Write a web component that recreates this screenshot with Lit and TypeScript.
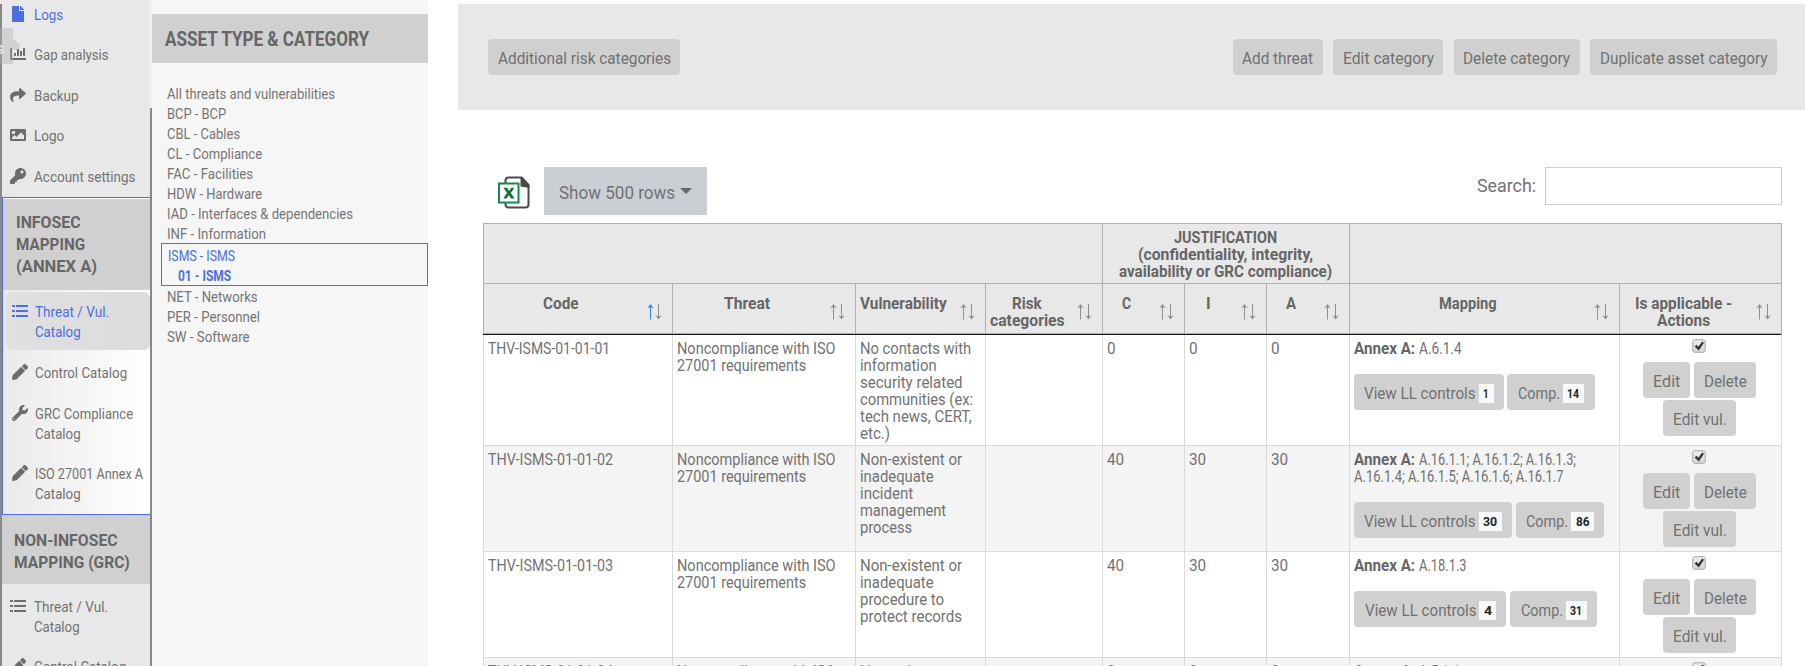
import { LitElement, html, svg, css, nothing } from "lit";
import { customElement, property } from "lit/decorators.js";
import { classMap } from "lit/directives/class-map.js";

type Line = [string, number];

/** One line of text condensed to a given advance width. */
@customElement("fit-text")
class FitText extends LitElement {
  @property() text = "";
  @property({ type: Number }) w = 0;
  static styles = css`
    :host { display: inline-block; vertical-align: top; white-space: nowrap; text-align: left; flex: none; }
    span { display: inline-block; transform-origin: 0 0; vertical-align: top; }
  `;
  render() {
    return html`<span>${this.text}</span>`;
  }
  updated() {
    const el = this.renderRoot.querySelector("span") as HTMLElement;
    el.style.transform = "none";
    const natural = el.getBoundingClientRect().width;
    const target = this.w + 1.1;
    this.style.width = target + "px";
    if (natural) el.style.transform = `scaleX(${target / natural})`;
  }
}

const fit = (l: Line) => html`<fit-text .text=${l[0]} .w=${l[1]}></fit-text>`;
const lines = (ls: Line[]) => ls.map((l) => html`<div class="line">${fit(l)}</div>`);

const ICONS: Record<string, { box: string; d: string }> = {
  file: { box: "-64 0 512 512", d: "M224 136V0H24C10.7 0 0 10.7 0 24v464c0 13.3 10.7 24 24 24h336c13.3 0 24-10.7 24-24V160H248c-13.2 0-24-10.8-24-24zm160-14.1v6.1H256V0h6.1c6.4 0 12.5 2.5 17 7l97.9 98c4.5 4.5 7 10.6 7 16.9z" },
  chart: { box: "0 0 512 512", d: "M332.8 320h38.4c6.4 0 12.8-6.4 12.8-12.8V172.8c0-6.4-6.4-12.8-12.8-12.8h-38.4c-6.4 0-12.8 6.4-12.8 12.8v134.4c0 6.4 6.4 12.8 12.8 12.8zm96 0h38.4c6.4 0 12.8-6.4 12.8-12.8V76.8c0-6.4-6.4-12.8-12.8-12.8h-38.4c-6.4 0-12.8 6.4-12.8 12.8v230.4c0 6.4 6.4 12.8 12.8 12.8zm-288 0h38.4c6.4 0 12.8-6.4 12.8-12.8v-70.4c0-6.4-6.4-12.8-12.8-12.8h-38.4c-6.4 0-12.8 6.4-12.8 12.8v70.4c0 6.4 6.4 12.8 12.8 12.8zm96 0h38.4c6.4 0 12.8-6.4 12.8-12.8V108.8c0-6.4-6.4-12.8-12.8-12.8h-38.4c-6.4 0-12.8 6.4-12.8 12.8v198.4c0 6.4 6.4 12.8 12.8 12.8zM496 384H64V80c0-8.84-7.16-16-16-16H16C7.16 64 0 71.16 0 80v336c0 17.67 14.33 32 32 32h464c8.84 0 16-7.16 16-16v-32c0-8.84-7.16-16-16-16z" },
  share: { box: "0 0 512 512", d: "M503.691 189.836L327.687 37.851C312.281 24.546 288 35.347 288 56.015v80.053C127.371 137.907 0 170.1 0 322.326c0 61.441 39.581 122.309 83.333 154.132 13.653 9.931 33.111-2.533 28.077-18.631C66.066 312.814 132.917 274.316 288 272.085V360c0 20.7 24.3 31.453 39.687 18.164l176.004-152c11.071-9.562 11.086-26.753 0-36.328z" },
  image: { box: "0 0 512 512", d: "M464 448H48c-26.51 0-48-21.49-48-48V112c0-26.51 21.49-48 48-48h416c26.51 0 48 21.49 48 48v288c0 26.51-21.49 48-48 48zM112 120c-30.928 0-56 25.072-56 56s25.072 56 56 56 56-25.072 56-56-25.072-56-56-56zM64 384h384V272l-87.515-87.515c-4.686-4.686-12.284-4.686-16.971 0L208 320l-55.515-55.515c-4.686-4.686-12.284-4.686-16.971 0L64 336v48z" },
  key: { box: "0 0 512 512", d: "M512 176.001C512 273.203 433.202 352 336 352c-11.22 0-22.19-1.062-32.827-3.069l-24.012 27.014A23.999 23.999 0 0 1 261.223 384H224v40c0 13.255-10.745 24-24 24h-40v40c0 13.255-10.745 24-24 24H24c-13.255 0-24-10.745-24-24v-78.059c0-6.365 2.529-12.47 7.029-16.971l161.802-161.802C163.108 213.814 160 195.271 160 176 160 78.798 238.797.001 335.999 0 433.488-.001 512 78.511 512 176.001zM336 128c0 26.51 21.49 48 48 48s48-21.49 48-48-21.49-48-48-48-48 21.49-48 48z" },
  list: { box: "0 0 512 512", d: "M16 64h64a16 16 0 0 1 16 16v32a16 16 0 0 1-16 16H16a16 16 0 0 1-16-16V80a16 16 0 0 1 16-16zM16 224h64a16 16 0 0 1 16 16v32a16 16 0 0 1-16 16H16a16 16 0 0 1-16-16v-32a16 16 0 0 1 16-16zM16 384h64a16 16 0 0 1 16 16v32a16 16 0 0 1-16 16H16a16 16 0 0 1-16-16v-32a16 16 0 0 1 16-16zM144 64h352a16 16 0 0 1 16 16v32a16 16 0 0 1-16 16H144a16 16 0 0 1-16-16V80a16 16 0 0 1 16-16zM144 224h352a16 16 0 0 1 16 16v32a16 16 0 0 1-16 16H144a16 16 0 0 1-16-16v-32a16 16 0 0 1 16-16zM144 384h352a16 16 0 0 1 16 16v32a16 16 0 0 1-16 16H144a16 16 0 0 1-16-16v-32a16 16 0 0 1 16-16z" },
  pen: { box: "0 0 512 512", d: "M497.9 142.1l-46.1 46.1c-4.7 4.7-12.3 4.7-17 0l-111-111c-4.7-4.7-4.7-12.3 0-17l46.1-46.1c18.7-18.7 49.1-18.7 67.9 0l60.1 60.1c18.8 18.7 18.8 49.1 0 67.9zM284.2 99.8L21.6 362.4.4 483.9c-2.9 16.4 11.4 30.6 27.8 27.8l121.5-21.3 262.6-262.6c4.7-4.7 4.7-12.3 0-17l-111-111c-4.8-4.7-12.4-4.7-17.1 0z" },
  wrench: { box: "0 0 512 512", d: "M507.73 109.1c-2.24-9.03-13.54-12.09-20.12-5.51l-74.36 74.36-67.88-11.31-11.31-67.88 74.36-74.36c6.62-6.62 3.43-17.9-5.66-20.16-47.38-11.74-99.55.91-136.58 37.93-39.64 39.64-50.55 97.1-34.05 147.2L18.74 402.76c-24.99 24.99-24.99 65.51 0 90.5 24.99 24.99 65.51 24.99 90.5 0l213.21-213.21c50.12 16.71 107.47 5.68 147.37-34.22 37.07-37.07 49.7-89.32 37.91-136.73zM64 472c-13.25 0-24-10.75-24-24 0-13.26 10.75-24 24-24s24 10.74 24 24c0 13.25-10.75 24-24 24z" },
};

const icon = (name: string) =>
  html`<svg class="icon" viewBox=${ICONS[name].box}>${svg`<path fill="currentColor" fill-rule="evenodd" d=${ICONS[name].d} />`}</svg>`;

const item = (name: string, ls: Line[], active = false) =>
  html`<div class=${classMap({ item: true, active })}>${icon(name)}<div>${lines(ls)}</div></div>`;

const sortArrows = (asc = false) => html`<svg class="sort" viewBox="0 0 15 16">
  <g fill="none" stroke-width="1">
    <path stroke=${asc ? "#2f86ee" : "#8f8f8f"} d="M3.5 15.5V1" />
    <path stroke="#8f8f8f" d="M11.5 0V14.5" />
  </g>
  <path fill=${asc ? "#2f86ee" : "#8f8f8f"} d="M3.5 0L6.7 4.2L3.5 3L.3 4.2z" />
  <path fill="#8f8f8f" d="M11.5 15.5L14.7 11.3L11.5 12.5L8.3 11.3z" />
</svg>`;

const excel = html`<svg class="excel" viewBox="0 0 32 33">
  <path d="M7.5 8V4.5a3 3 0 0 1 3-3h13L30.5 9v19.500a3 3 0 0 1-3 3h-17a3 3 0 0 1-3-3V26" fill="#fff" stroke="#4a4a46" stroke-width="2" />
  <path d="M22.500 1h2.200l6.800 8.500v2.500l-9-1.500z" fill="#4a4a46" />
  <rect x="1" y="7.500" width="19.500" height="19" fill="#fff" stroke="#17884a" stroke-width="2" />
  <path d="M5.500 11.800h3.700l1.900 3.200 2-3.200h3.300l-3.500 5.300 3.700 5.400h-3.700l-2.100-3.500-2.200 3.500H5.200l3.800-5.500z" fill="#12733c" />
</svg>`;

const checkbox = html`<svg class="check" viewBox="0 0 14 15">
  <defs><linearGradient id="cb" x1="0" y1="0" x2="0" y2="1"><stop offset="0" stop-color="#ededed" /><stop offset="1" stop-color="#d6d6d6" /></linearGradient></defs>
  <rect x=".75" y=".75" width="12.5" height="12.5" rx="2" fill="url(#cb)" stroke="#a6a6a6" />
  <path d="M2.600 7.600L4.400 5.800l2 2L10.200 2.500 12 3.700 6.800 11.500z" fill="#333" />
</svg>`;

interface Row {
  code: Line; threat: Line[]; vul: Line[]; cia: Line[];
  annex: Line; more?: Line; view: Line; viewW: number; comp: Line; compW: number; gap: number;
}
const THREAT: Line[] = [["Noncompliance with ISO", 157.5], ["27001 requirements", 128]];
const ROWS: Row[] = [
  {
    code: ["THV-ISMS-01-01-01", 121], threat: THREAT,
    vul: [["No contacts with", 110], ["information", 75.5], ["security related", 101.5], ["communities (ex:", 112], ["tech news, CERT,", 110.5], ["etc.)", 29]],
    cia: [["0", 7.5], ["0", 7.5], ["0", 7.5]], annex: ["A.6.1.4", 41.5],
    view: ["1", 4.5], viewW: 149.3, comp: ["14", 11], compW: 88, gap: 3.2,
  },
  {
    code: ["THV-ISMS-01-01-02", 124], threat: THREAT,
    vul: [["Non-existent or", 101], ["inadequate", 72.5], ["incident", 52], ["management", 85], ["process", 51]],
    cia: [["40", 16], ["30", 16], ["30", 16]], annex: ["A.16.1.1; A.16.1.2; A.16.1.3;", 156], more: ["A.16.1.4; A.16.1.5; A.16.1.6; A.16.1.7", 208.5],
    view: ["30", 13], viewW: 157.3, comp: ["86", 12.5], compW: 88.5, gap: 4.4,
  },
  {
    code: ["THV-ISMS-01-01-03", 124], threat: THREAT,
    vul: [["Non-existent or", 101], ["inadequate", 72.5], ["procedure to", 83], ["protect records", 101]],
    cia: [["40", 16], ["30", 16], ["30", 16]], annex: ["A.18.1.3", 46.5],
    view: ["4", 7], viewW: 152.2, comp: ["31", 11], compW: 86.5, gap: 4,
  },
  {
    code: ["THV-ISMS-01-01-04", 124], threat: THREAT,
    vul: [["Non-existent or", 101]],
    cia: [["0", 7.5], ["0", 7.5], ["0", 7.5]], annex: ["A.5.1.1", 40],
    view: ["1", 4.5], viewW: 149.3, comp: ["14", 11], compW: 88, gap: 3.2,
  },
];

const HEADS: Line[][] = [
  [["Code", 34.5]], [["Threat", 45]], [["Vulnerability", 85.5]], [["Risk", 28.5], ["categories", 73.5]],
  [["C", 8]], [["I", 3.500]], [["A", 9]], [["Mapping", 56.5]], [["Is applicable -", 96], ["Actions", 52]],
];

const CATEGORIES_TOP: Line[] = [
  ["All threats and vulnerabilities", 167], ["BCP - BCP", 58], ["CBL - Cables", 72], ["CL - Compliance", 94],
  ["FAC - Facilities", 85], ["HDW - Hardware", 94], ["IAD - Interfaces & dependencies", 185], ["INF - Information", 98],
];
const CATEGORIES_END: Line[] = [["NET - Networks", 89.5], ["PER - Personnel", 92], ["SW - Software", 81.5]];

@customElement("app-root")
class AppRoot extends LitElement {
  static styles = css`
    :host { display: flex; width: 100%; height: 666px; overflow: hidden; background: #fff; color: #727272; font-family: Roboto, "Liberation Sans", sans-serif; font-size: 16px; position: relative; }
    * { box-sizing: border-box; }
    .line { display: block; white-space: nowrap; }
    svg { display: block; flex: none; }
    b { color: #666; }

    .side { width: 152px; flex: none; height: 666px; overflow: hidden; border-left: 2px solid #888; border-right: 2px solid #888; background: #e8e8e8; font-size: 15px; line-height: 20px; display: flex; flex-direction: column; }
    .icon { width: 16px; height: 16px; margin-top: 1px; color: #6c6c6c; }
    .item { display: flex; gap: 7.500px; padding-left: 8px; flex: none; }
    .plain { height: 197px; padding-top: 5px; display: flex; flex-direction: column; gap: 20.400px; flex: none; }
    .blue { color: #4a6fdf; }
    .blue .icon { color: #4a6fdf; }
    .section { height: 318px; flex: none; border: 1px solid #4a6fdf; border-right: 0; padding-top: 1px; background: #fff; display: flex; flex-direction: column; }
    .heading { background: #d0d0d0; color: #666; font-weight: 700; font-size: 17px; line-height: 22px; flex: none; }
    .h1 { height: 91px; padding: 12px 0 0 12.600px; }
    .h2 { height: 69px; padding: 14px 0 0 12px; }
    .body { flex: 1; padding-top: 2px; background: linear-gradient(90deg, #eaeaea, #fff); display: flex; flex-direction: column; }
    .body .item { padding-left: 8.500px; }
    .body .active { height: 58px; margin-left: 3px; padding: 10px 0 0 5.500px; border-radius: 6px; background: linear-gradient(90deg, #e0e0e0, #dcdcdc); color: #4a6fdf; margin-bottom: 13px; }
    .active .icon { color: #4a6fdf; margin-top: 1px; }
    .body .item + .item + .item { margin-top: 20.500px; }
    .last { padding-top: 13px; display: flex; flex-direction: column; gap: 20px; }

    .panel { width: 276px; flex: none; background: #f6f6f6; padding-top: 14px; display: flex; flex-direction: column; font-size: 15px; line-height: 20px; }
    .panel-head { height: 49px; background: #d0d0d0; color: #666; font-size: 20px; font-weight: 700; line-height: 49px; padding: 1px 0 0 12.600px; }
    .cats { padding: 21px 0 0 14.500px; color: #757575; }
    .picked { margin: -1px 0 1px -5.500px; height: 43px; border: 1px solid #4a6fdf; color: #4a6fdf; padding: 2px 0 0 6px; }
    .sub { font-weight: 700; padding-left: 9.500px; }

    .main { flex: 1; margin-left: 30px; min-width: 0; display: flex; flex-direction: column; padding-top: 4px; }
    .toolbar { height: 106px; flex: none; background: #e8e8e8; padding: 35px 28.200px 0 30px; display: flex; gap: 10.400px; align-items: flex-start; }
    .spring { flex: 1; }
    .btn { height: 36px; line-height: 34px; padding: 2px 9.500px 0; border-radius: 4px; background: #d0d0d0; font-size: 17px; display: inline-flex; color: #707070; justify-content: center; flex: none; }
    .controls { height: 113px; flex: none; padding: 57px 23px 0 40px; display: flex; align-items: flex-start; }
    .excel { width: 32px; height: 33px; margin: 9px 14px 0 0; }
    .show { width: 163px; height: 48px; background: #cacfd3; font-size: 19px; line-height: 46px; padding: 3px 0 0 14.500px; display: flex; }
    .caret { border: 6px solid transparent; border-top-color: #666; border-bottom: 0; margin: 18px 0 0 5.500px; height: 6px; width: 12px; }
    .label { font-size: 19px; line-height: 36px; padding: 1px 9px 0 0; }
    .search { width: 237px; height: 38px; border: 1px solid #cbd0d6; background: #fff; }

    .table { margin-left: 25px; width: 1299px; line-height: 17px; border-right: 1px solid #ddd; }
    .row { display: grid; grid-template-columns: 189px 183px 130px 117px 82px 82px 83px 270px 162px; border-bottom: 1px solid #dadada; height: 106px; }
    .row.first { height: 111px; }
    .row.odd { background: #f4f4f4; }
    .cell { border-left: 1px solid #dadada; padding: 5px 0 0 4.300px; min-width: 0; }
    .head { background: #e8e8e8; color: #666; font-weight: 700; border-right: 1px solid #b0b0b0; margin-right: -1px; text-align: center; }
    .top { display: grid; grid-template-columns: 619px 247px 432px; height: 60px; border-top: 1px solid #b0b0b0; }
    .top > div, .cols > div { border-left: 1px solid #b0b0b0; padding-top: 5px; }
    .cols { display: grid; grid-template-columns: 189px 183px 130px 117px 82px 82px 83px 270px 162px; height: 52px; border-top: 1px solid #b0b0b0; border-bottom: 1px solid #111; box-shadow: inset 0 -1px #b0b0b0; }
    .cols > div { display: flex; padding: 11px 10.500px 0 4px; }
    .name { flex: 1; display: flex; flex-direction: column; align-items: center; min-width: 0; }
    .sort { width: 15px; height: 16px; margin: 9px 0 0 12.500px; }
    .annex { display: flex; gap: 3.500px; }
    .btns { display: flex; margin-top: 17px; }
    .badge { background: #f8f9fa; color: #212529; font-weight: 700; font-size: 12.500px; height: 19px; line-height: 20px; margin: 8px 0 0 3px; padding: 0 4.500px; display: flex; }
    .btn.map { padding: 2px 0 0; }
    .acts { display: flex; flex-direction: column; align-items: center; padding: 4px 1.500px 0 0; }
    .check { width: 14px; height: 15px; margin: 0 2px 8px 0; }
    .pair { display: flex; gap: 4.500px; margin-bottom: 2px; }
    .act { padding: 2px 9.600px 0; }
    .crumb { position: absolute; left: 0; top: 28px; width: 22px; height: 36px; }
    .crumb-s { position: absolute; left: -5px; top: 38px; font-size: 17px; line-height: 20px; color: #eee; }
    .cap { position: absolute; left: 0; top: 0; width: 2px; height: 4px; background: #e8e8e8; }
    .cap-r { position: absolute; left: 150px; top: 0; width: 2px; height: 108px; background: #f1f1f1; }
  `;

  private mapButton(label: Line, badge: Line, width: number) {
    return html`<div class="btn map" style="width:${width}px">${fit(label)}<span class="badge">${fit(badge)}</span></div>`;
  }

  private row(r: Row, i: number) {
    return html`<div class=${classMap({ row: true, first: i === 0, odd: i % 2 === 1 })}>
      <div class="cell">${lines([r.code])}</div>
      <div class="cell">${lines(r.threat)}</div>
      <div class="cell">${lines(r.vul)}</div>
      <div class="cell"></div>
      ${r.cia.map((c) => html`<div class="cell">${lines([c])}</div>`)}
      <div class="cell">
        <div class="annex"><b>${fit(["Annex A:", 60])}</b>${fit(r.annex)}</div>
        ${r.more ? lines([r.more]) : nothing}
        <div class="btns" style="gap:${r.gap}px">
          ${this.mapButton(["View LL controls", 110.5], r.view, r.viewW)}
          ${this.mapButton(["Comp.", 41], r.comp, r.compW)}
        </div>
      </div>
      <div class="cell acts">
        ${checkbox}
        <div class="pair"><div class="btn act">${fit(["Edit", 26.3])}</div><div class="btn act">${fit(["Delete", 41.6])}</div></div>
        <div class="btn act">${fit(["Edit vul.", 52.8])}</div>
      </div>
    </div>`;
  }

  render() {
    return html`
      <nav class="side">
        <div class="plain">
          <div class="blue">${item("file", [["Logs", 28]])}</div>
          ${item("chart", [["Gap analysis", 73.5]])}
          ${item("share", [["Backup", 43.5]])}
          ${item("image", [["Logo", 29]])}
          ${item("key", [["Account settings", 100.5]])}
        </div>
        <div class="section">
          <div class="heading h1">${lines([["INFOSEC", 63.5], ["MAPPING", 68], ["(ANNEX A)", 80]])}</div>
          <div class="body">
            ${item("list", [["Threat / Vul.", 73], ["Catalog", 44.5]], true)}
            ${item("pen", [["Control Catalog", 91]])}
            ${item("wrench", [["GRC Compliance", 97], ["Catalog", 44.5]])}
            ${item("pen", [["ISO 27001 Annex A", 107], ["Catalog", 44.5]])}
          </div>
        </div>
        <div class="heading h2">${lines([["NON-INFOSEC", 102.5], ["MAPPING (GRC)", 114.5]])}</div>
        <div class="last">
          ${item("list", [["Threat / Vul.", 73], ["Catalog", 44.5]])}
          ${item("pen", [["Control Catalog", 91]])}
        </div>
      </nav>
      <aside class="panel">
        <div class="panel-head">${fit(["ASSET TYPE & CATEGORY", 203])}</div>
        <div class="cats">
          ${lines(CATEGORIES_TOP)}
          <div class="picked">${lines([["ISMS - ISMS", 66]])}<div class="sub">${lines([["01 - ISMS", 52]])}</div></div>
          ${lines(CATEGORIES_END)}
        </div>
      </aside>
      <main class="main">
        <div class="toolbar">
          <div class="btn">${fit(["Additional risk categories", 172])}</div>
          <div class="spring"></div>
          <div class="btn">${fit(["Add threat", 70])}</div>
          <div class="btn">${fit(["Edit category", 90])}</div>
          <div class="btn">${fit(["Delete category", 106])}</div>
          <div class="btn">${fit(["Duplicate asset category", 166.5])}</div>
        </div>
        <div class="controls">
          ${excel}
          <div class="show">${fit(["Show 500 rows", 115])}<span class="caret"></span></div>
          <div class="spring"></div>
          <div class="label">${fit(["Search:", 58])}</div>
          <div class="search"></div>
        </div>
        <div class="table">
          <div class="head">
            <div class="top"><div></div>
              <div>${lines([["JUSTIFICATION", 102], ["(confidentiality, integrity,", 174], ["availability or GRC compliance)", 212]])}</div>
              <div></div></div>
            <div class="cols">${HEADS.map((h, i) => html`<div><div class="name">${h.map(fit)}</div>${sortArrows(i === 0)}</div>`)}</div>
          </div>
          ${ROWS.map((r, i) => this.row(r, i))}
        </div>
      </main>
      <svg class="crumb" viewBox="0 0 22 36"><path d="M0 0H13V10L21 18L17 22H13V36H0z" fill="#b0b0b0" fill-opacity=".42" /></svg>
      <span class="crumb-s">s</span>
      <div class="cap"></div>
      <div class="cap-r"></div>
    `;
  }
}
